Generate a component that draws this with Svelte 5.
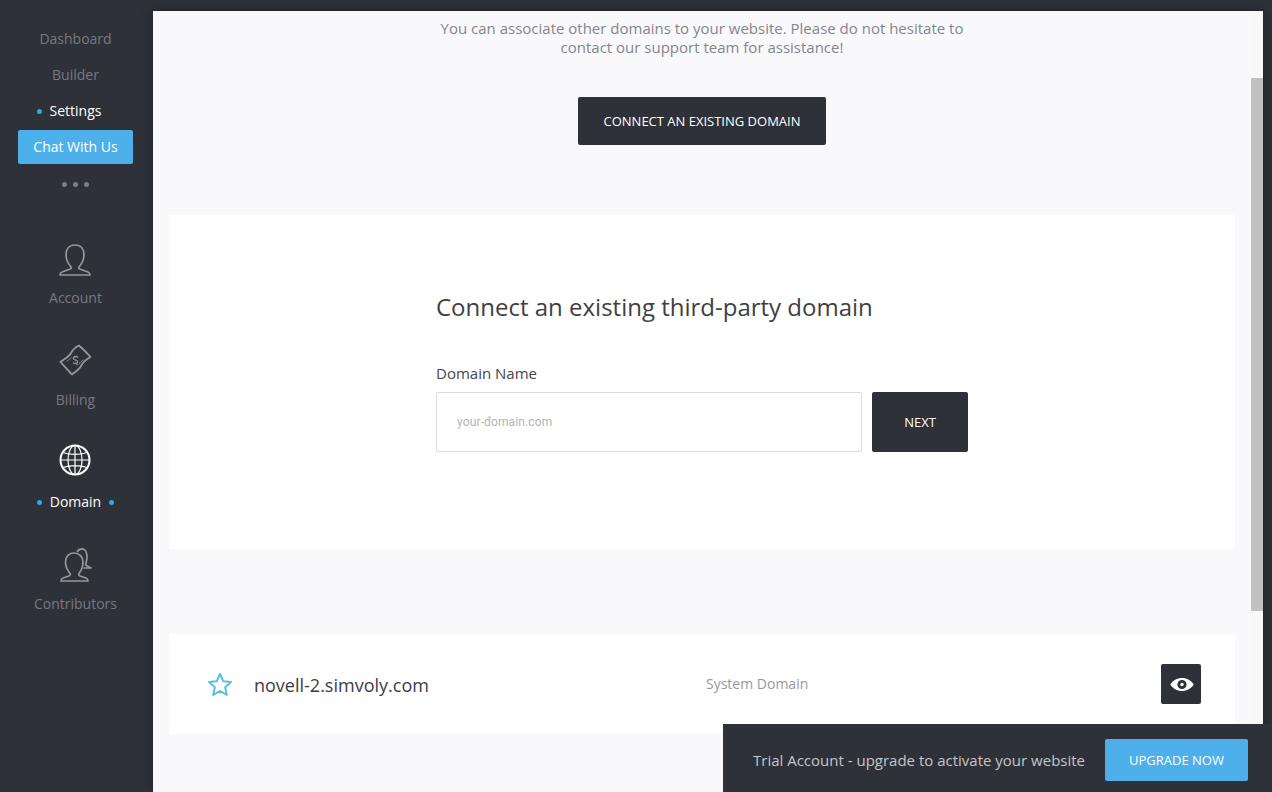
<script>
  const topLinks = [
    { label: "Dashboard" },
    { label: "Builder" },
    { label: "Settings", active: true }
  ];
</script>

<div class="page">
  <nav class="sidebar">
    {#each topLinks as link}
      <a class="top-link" class:active={link.active}>
        {#if link.active}<i class="dot"></i>{/if}{link.label}
      </a>
    {/each}
    <a class="chat">Chat With Us</a>
    <div class="more"><i></i><i></i><i></i></div>

    <a class="nav-item account">
      <svg width="32" height="32" viewBox="0 0 32 32" fill="none" stroke="#96979c" stroke-width="1.7" stroke-linejoin="round">
        <path d="M16 1C10 1 7 5 7 11c0 5 2.500 9 5 12 .5 .8 0 1.500-.8 2L3 28c-1.500 .5-2 1.500-2 3h30c0-1.500-.5-2.500-2-3l-8.200-3c-.8-.5-1.300-1.200-.8-2 2.500-3 5-7 5-12 0-6-3-10-9-10z"/>
      </svg>
      <span>Account</span>
    </a>
    <a class="nav-item billing">
      <svg width="33" height="32" viewBox="0 0 33 32" fill="none" stroke="#96979c" stroke-width="1.800" stroke-linejoin="round">
        <path d="M1.500 18C5 15 10 13 12 9 14 5 17 3 20 1.500 23 4 28 9 31.500 13 28 15 24 18 22 22 20 26 16 28 13 30.500 10 27 5 22 1.500 18z"/>
        <path d="M7.500 17.500C9.500 16.200 11 15 12.500 13.500M24.500 15.500C22.500 17 21 18.500 19.500 20.500" stroke-width="0.8"/>
        <path d="M19 13.200c-2-1.500-5.200-.2-4.400 1.800 .7 1.500 3.700 .6 4.100 2.300 .3 1.800-2.800 2.800-4.700 1.400M15 11.800l1 1.200M17.500 19.800l1 1.200" stroke-width="1.300"/>
      </svg>
      <span>Billing</span>
    </a>
    <a class="nav-item domain active">
      <svg width="32" height="32" viewBox="0 0 32 32" fill="none" stroke="#fff">
        <circle cx="16" cy="16" r="14.500" stroke-width="2"/>
        <ellipse cx="16" cy="16" rx="7" ry="14.500" stroke-width="1.200"/>
        <path d="M16 1.500v29M1.500 16h29M4 8.500c7 2.500 17 2.500 24 0M4 23.500c7-2.500 17-2.500 24 0" stroke-width="1.200"/>
      </svg>
      <span><i class="dot"></i>Domain<i class="dot after"></i></span>
    </a>
    <a class="nav-item contributors">
      <svg width="32" height="34" viewBox="0 0 32 34" fill="none" stroke="#96979c" stroke-width="1.7" stroke-linejoin="round">
        <path d="M14 5C8.500 5 5.500 9 5.500 14 5.500 19 8 23 10 25.500 10.500 26.500 10 27.500 9 28L3 30C1.500 30.500 1 31.500 1 33H28C28 31.500 27.500 30.500 26 30L20 28C19 27.500 18.500 26.500 19 25.500 21 23 23 19 23 14 23 9 19.500 5 14 5z"/>
        <path d="M17 4C18 2 20 .8 22 .8 25.500 .8 27 5 27 9 27 12 26 15 25.500 17L31 20H23.500"/>
      </svg>
      <span>Contributors</span>
    </a>
  </nav>

  <main class="panel">
    <section class="intro">
      <p>You can associate other domains to your website. Please do not hesitate to contact our support team for assistance!</p>
      <button class="dark connect">CONNECT AN EXISTING DOMAIN</button>
    </section>

    <section class="card form-card">
      <div class="form">
        <h2>Connect an existing third-party domain</h2>
        <label for="domain">Domain Name</label>
        <div class="field-row">
          <input id="domain" type="text" placeholder="your-domain.com" />
          <button class="dark next">NEXT</button>
        </div>
      </div>
    </section>

    <section class="card domain-row">
      <svg class="star" width="26" height="26" viewBox="0 0 26 26" fill="none" stroke="#5bbde4" stroke-width="2" stroke-linejoin="round">
        <path d="M13 2l3.200 7.200 7.800 .8-5.900 5.200 1.700 7.700L13 19l-6.800 3.900 1.700-7.700L2 10l7.800-.8z"/>
      </svg>
      <span class="name">novell-2.simvoly.com</span>
      <span class="kind">System Domain</span>
      <button class="dark eye" aria-label="View">
        <svg width="24" height="13" viewBox="0 0 24 13">
          <path fill="#fff" fill-rule="evenodd" d="M12 0C7 0 2.800 2.500 .3 6.500 2.800 10.500 7 13 12 13s9.200-2.500 11.700-6.500C21.200 2.500 17 0 12 0zM12 1.900a4.600 4.600 0 1 1 0 9.200 4.600 4.600 0 0 1 0-9.200zm0 2.800a1.800 1.800 0 1 0 0 3.600 1.800 1.800 0 0 0 0-3.600z"/>
        </svg>
      </button>
    </section>

    <div class="scrollbar"><div class="thumb"></div></div>
  </main>

  <div class="trial">
    <span>Trial Account - upgrade to activate your website</span>
    <button>UPGRADE NOW</button>
  </div>
</div>

<style>
  :global(body) {
    margin: 0;
    background: #2f3139;
    font-family: "Open Sans", "Liberation Sans", sans-serif;
  }

  .page {
    position: relative;
    display: flex;
    height: 792px;
    overflow: hidden;
    background: #2f3139;
  }

  .sidebar {
    flex: 0 0 153px;
    display: flex;
    flex-direction: column;
    align-items: center;
    padding: 21px 2px 0 0;
    box-sizing: border-box;
    font-size: 14px;
    color: #777881;
  }

  .top-link {
    height: 36px;
    line-height: 36px;
    position: relative;
  }

  .top-link.active {
    color: #fff;
  }

  .top-link .dot {
    left: -13px;
    top: 16px;
  }

  .dot {
    position: absolute;
    width: 5px;
    height: 5px;
    border-radius: 50%;
    background: #2aa9ea;
  }

  .chat {
    width: 115px;
    height: 34px;
    line-height: 34px;
    margin-top: 1px;
    text-align: center;
    color: #fff;
    background: #4eb0ea;
    border-radius: 2px;
  }

  .more {
    display: flex;
    gap: 6px;
    margin-top: 18px;
    height: 5px;
  }

  .more i {
    width: 5px;
    height: 5px;
    border-radius: 50%;
    background: #7c7d87;
  }

  .nav-item {
    display: flex;
    flex-direction: column;
    align-items: center;
  }

  .nav-item span {
    position: relative;
    line-height: 20px;
  }

  .account {
    margin-top: 57px;
    gap: 12px;
  }

  .billing {
    margin-top: 36px;
    gap: 14px;
  }

  .domain {
    margin-top: 34px;
    gap: 16px;
    color: #fff;
  }

  .domain .dot {
    left: -13px;
    top: 8px;
  }

  .domain .dot.after {
    left: auto;
    right: -13px;
  }

  .contributors {
    margin-top: 36px;
    gap: 12px;
  }

  .panel {
    position: relative;
    flex: 0 0 1110px;
    margin-top: 11px;
    background: #f9f9fb;
    box-shadow: 0 0 12px rgba(0, 0, 0, 0.35);
    box-sizing: border-box;
    padding: 0 28px 0 16px;
    color: #3c3d44;
  }

  .intro {
    display: flex;
    flex-direction: column;
    align-items: center;
    padding-top: 8px;
    height: 204px;
    box-sizing: border-box;
  }

  .intro p {
    width: 540px;
    margin: 0;
    font-size: 15px;
    line-height: 19px;
    text-align: center;
    color: #85868b;
  }

  button {
    font-family: inherit;
    border: 0;
    padding: 0;
  }

  .dark {
    background: #2f3139;
    color: #fff;
    border-radius: 2px;
    font-size: 13px;
  }

  .connect {
    width: 248px;
    height: 48px;
    margin-top: 40px;
  }

  .card {
    background: #fff;
  }

  .form-card {
    height: 334px;
    margin-bottom: 85px;
    padding: 76px 0 0 267px;
    box-sizing: border-box;
  }

  .form {
    width: 532px;
  }

  h2 {
    margin: 0;
    font-size: 24px;
    font-weight: 400;
    line-height: 32px;
    color: #3e3f45;
  }

  label {
    display: block;
    margin-top: 40px;
    font-size: 15px;
    line-height: 20px;
    color: #45464d;
  }

  .field-row {
    display: flex;
    gap: 10px;
    margin-top: 9px;
  }

  input {
    flex: 1;
    min-width: 0;
    height: 60px;
    box-sizing: border-box;
    padding: 0 20px;
    border: 1px solid #dcdcdc;
    border-radius: 2px;
    font-family: "Roboto", "Liberation Sans", sans-serif;
    font-size: 12px;
    letter-spacing: 0.13px;
    outline: none;
  }

  input::placeholder {
    color: #b4b4b4;
    opacity: 1;
  }

  .next {
    flex: 0 0 96px;
    height: 60px;
  }

  .domain-row {
    position: relative;
    display: flex;
    align-items: center;
    height: 100px;
    padding: 0 34px 0 38px;
    box-sizing: border-box;
  }

  .star {
    margin: 2px 21px 0 0;
  }

  .name {
    margin-top: 2px;
    font-size: 18px;
    width: 452px;
  }

  .kind {
    font-size: 14px;
    color: #97989d;
    position: relative;
    top: -1px;
  }

  .eye {
    margin-left: auto;
    width: 40px;
    height: 40px;
    display: flex;
    align-items: center;
    justify-content: center;
    padding-left: 2px;
  }

  .scrollbar {
    position: absolute;
    top: 0;
    right: 0;
    bottom: 0;
    width: 12px;
    background: #f8f8f9;
  }

  .thumb {
    margin-top: 67px;
    height: 533px;
    background: #c1c1c1;
  }

  .trial {
    position: absolute;
    right: 0;
    bottom: 0;
    width: 549px;
    height: 68px;
    box-sizing: border-box;
    padding: 4px 24px 0 30px;
    display: flex;
    align-items: center;
    justify-content: space-between;
    background: #2f3139;
    color: #c4c5c9;
    font-size: 15px;
  }

  .trial button {
    width: 143px;
    height: 42px;
    background: #4eb0ea;
    color: #fff;
    font-size: 13px;
    border-radius: 2px;
  }
</style>
